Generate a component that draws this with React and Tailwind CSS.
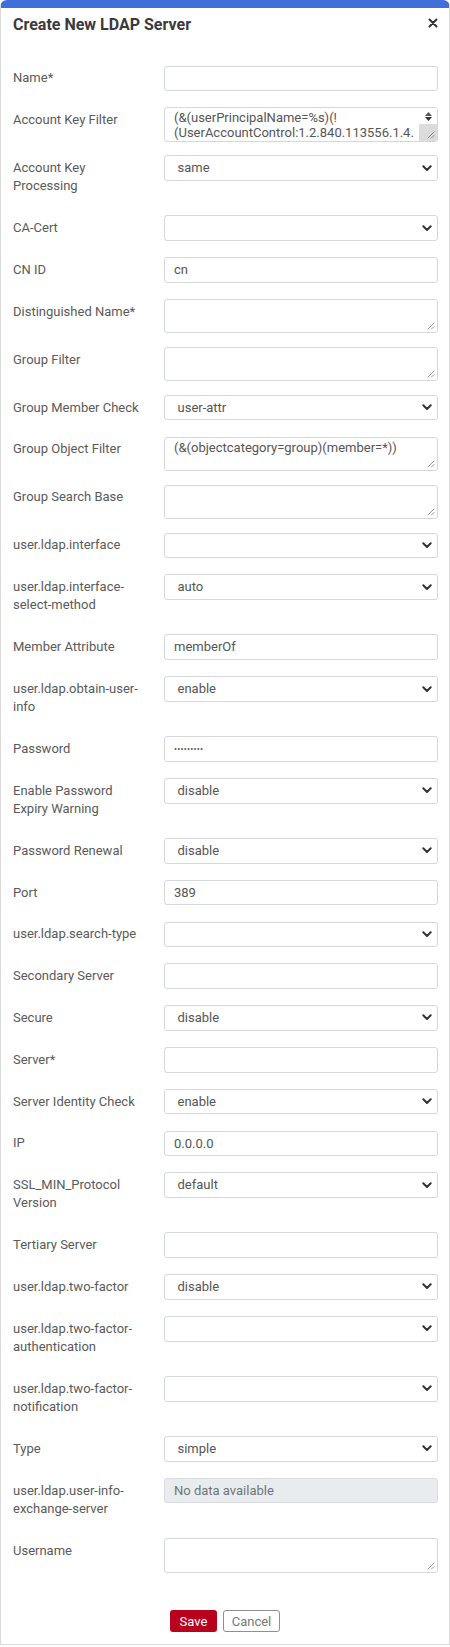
import React from "react";

const rows = [
  { label: "Name*", kind: "input", value: "" },
  { label: "Account Key Filter", kind: "akf" },
  { label: "Account Key Processing", kind: "select", value: "same" },
  { label: "CA-Cert", kind: "select", value: "" },
  { label: "CN ID", kind: "input", value: "cn" },
  { label: "Distinguished Name*", kind: "textarea", value: "" },
  { label: "Group Filter", kind: "textarea", value: "" },
  { label: "Group Member Check", kind: "select", value: "user-attr" },
  { label: "Group Object Filter", kind: "textarea", value: "(&(objectcategory=group)(member=*))" },
  { label: "Group Search Base", kind: "textarea", value: "" },
  { label: "user.ldap.interface", kind: "select", value: "" },
  { label: "user.ldap.interface-select-method", kind: "select", value: "auto" },
  { label: "Member Attribute", kind: "input", value: "memberOf" },
  { label: "user.ldap.obtain-user-info", kind: "select", value: "enable" },
  { label: "Password", kind: "password" },
  { label: "Enable Password Expiry Warning", kind: "select", value: "disable" },
  { label: "Password Renewal", kind: "select", value: "disable" },
  { label: "Port", kind: "input", value: "389" },
  { label: "user.ldap.search-type", kind: "select", value: "" },
  { label: "Secondary Server", kind: "input", value: "" },
  { label: "Secure", kind: "select", value: "disable" },
  { label: "Server*", kind: "input", value: "" },
  { label: "Server Identity Check", kind: "select", value: "enable" },
  { label: "IP", kind: "input", value: "0.0.0.0" },
  { label: "SSL_MIN_Protocol Version", kind: "select", value: "default" },
  { label: "Tertiary Server", kind: "input", value: "" },
  { label: "user.ldap.two-factor", kind: "select", value: "disable" },
  { label: "user.ldap.two-factor-authentication", kind: "select", value: "" },
  { label: "user.ldap.two-factor-notification", kind: "select", value: "" },
  { label: "Type", kind: "select", value: "simple" },
  { label: "user.ldap.user-info-exchange-server", kind: "disabled", value: "No data available" },
  { label: "Username", kind: "username" },
];

function Chevron() {
  return (
    <svg width="10" height="7" viewBox="0 0 10 7" className="shrink-0">
      <path d="M1.3 1.3 L5 5 L8.7 1.3" fill="none" stroke="#333" strokeWidth="2" strokeLinecap="round" strokeLinejoin="round" />
    </svg>
  );
}

function Grip({ color = "#9a9a9a" }) {
  return (
    <svg width="9" height="9" viewBox="0 0 9 9" className="absolute right-[2px] bottom-[2px]">
      <path d="M8 2 L2 8 M8 5.5 L5.5 8" stroke={color} strokeWidth="1" strokeLinecap="round" />
    </svg>
  );
}

function Control({ row }) {
  const base = "rounded-[3px] border border-[#d5d8db] bg-white text-[13px] text-[#555]";
  switch (row.kind) {
    case "input":
      return (
        <div className={`${base} h-[25.6px] pl-[9px] flex items-center`}>{row.value}</div>
      );
    case "password":
      return (
        <div className={`${base} h-[25.6px] pl-[9px] flex items-center`}>
          <span className="text-[9px] tracking-[0.2px] text-[#555] leading-none">•••••••••</span>
        </div>
      );
    case "select":
      return (
        <div className={`${base} h-[25.6px] pl-[12.5px] pr-[5px] flex items-center justify-between`}>
          <span>{row.value}</span>
          <Chevron />
        </div>
      );
    case "disabled":
      return (
        <div className="h-[25.6px] rounded-[3px] border border-[#d9dcdf] bg-[#e9ecef] pl-[9px] flex items-center text-[13px] text-[#6f757b]">
          {row.value}
        </div>
      );
    case "textarea":
      return (
        <div className={`${base} relative h-[34.4px] pl-[9px] pt-[2px] leading-[16px] overflow-hidden`}>
          {row.value}
          <Grip />
        </div>
      );
    case "username":
      return (
        <div className={`${base} relative h-[35.6px] pl-[9px] pt-[2px] leading-[16px]`}>
          <Grip />
        </div>
      );
    case "akf":
      return (
        <div className={`${base} relative h-[34.4px] pl-[9px] pt-[1.5px] leading-[15.4px] overflow-hidden whitespace-nowrap`}>
          <div>(&amp;(userPrincipalName=%s)(!</div>
          <div>(UserAccountControl:1.2.840.113556.1.4.</div>
          <div className="absolute right-0 top-0 bottom-0 w-[18px] bg-white flex flex-col">
            <div className="h-[16px] flex flex-col items-center justify-center gap-[1.5px]">
              <svg width="7" height="4" viewBox="0 0 7 4"><path d="M0 4 L3.5 0 L7 4 Z" fill="#555" /></svg>
              <svg width="7" height="4" viewBox="0 0 7 4"><path d="M0 0 L3.5 4 L7 0 Z" fill="#333" /></svg>
            </div>
            <div className="relative flex-1 bg-[#dcdcdc]">
              <Grip color="#8a8a8a" />
            </div>
          </div>
        </div>
      );
    default:
      return null;
  }
}

export default function App() {
  return (
    <div className="w-[450px] font-['Roboto','Liberation_Sans',sans-serif] bg-white">
      <div className="rounded-t-[7px] border border-[#d9d9d9] border-t-[8px] border-t-[#3f6fd9] bg-white">
        <div className="h-[57.5px] pl-[12px] pr-[11px] pt-[7px] flex items-start justify-between">
          <h1 className="text-[16px] leading-[20px] font-bold text-[#3a3a3a]">Create New LDAP Server</h1>
          <svg width="10" height="10" viewBox="0 0 10 10" className="mt-[3px]">
            <path d="M1.5 1.5 L8.5 8.5 M8.5 1.5 L1.5 8.5" stroke="#333" strokeWidth="2" strokeLinecap="round" />
          </svg>
        </div>
        <div className="pl-[12px] pr-[11px]">
          {rows.map((row, i) => {
            const isTa = row.kind === "textarea" || row.kind === "akf";
            const isLast = i === rows.length - 1;
            return (
              <div
                key={row.label}
                className={`flex items-start ${isLast ? "" : isTa ? "mb-[13.6px]" : "mb-[16px]"}`}
              >
                <div className="w-[151px] shrink-0 pr-[19px] pt-[3.8px] pb-[3.8px] text-[13px] leading-[18.2px] text-[#5a5a5a]">
                  {row.label}
                </div>
                <div className="flex-1 min-w-0">
                  <Control row={row} />
                </div>
              </div>
            );
          })}
        </div>
        <div className="flex justify-center gap-[6px] pt-[36.5px] pb-[12px]">
          <button className="h-[22.5px] w-[47px] rounded-[3px] bg-[#b8001f] text-white text-[13px] leading-none">
            Save
          </button>
          <button className="h-[22.5px] w-[57px] rounded-[3px] border border-[#8f8f8f] bg-white text-[#777] text-[13px] leading-none">
            Cancel
          </button>
        </div>
      </div>
    </div>
  );
}
